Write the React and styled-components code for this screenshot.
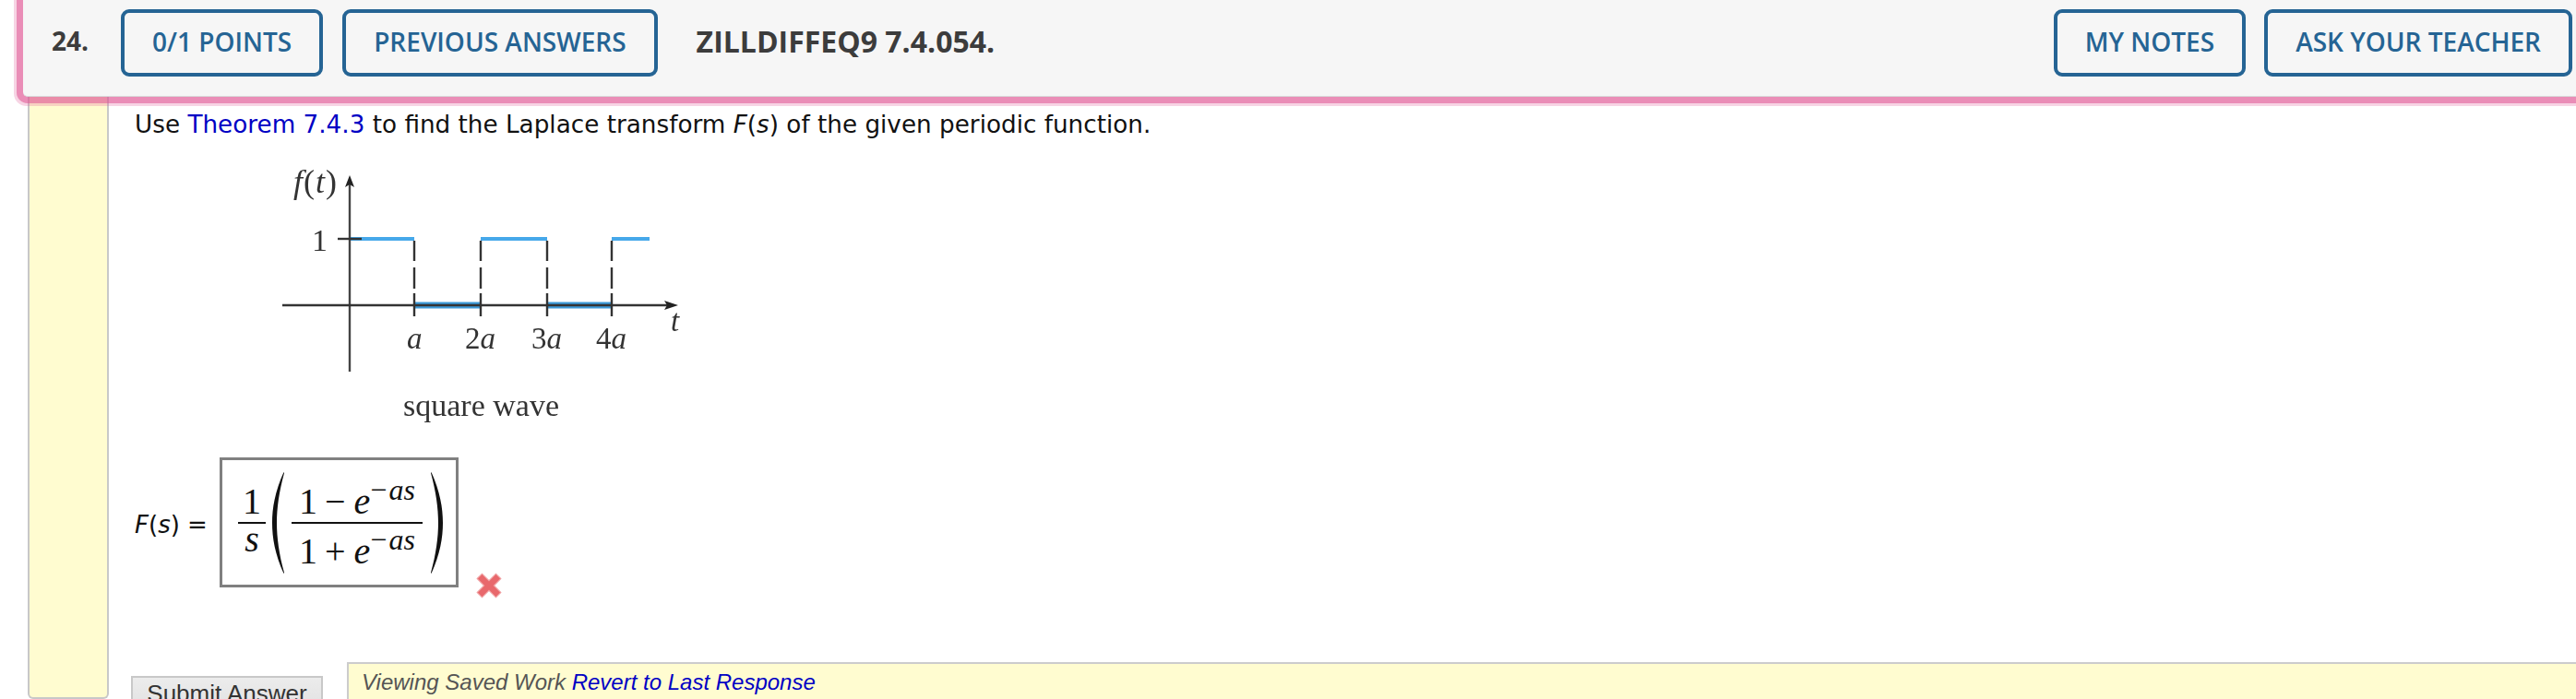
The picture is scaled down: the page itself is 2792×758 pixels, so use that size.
import React from "react";
import styled, { createGlobalStyle } from "styled-components";

const Global = createGlobalStyle`
  html, body { margin: 0; padding: 0; background: #fff; overflow: hidden; }
  #root { width: 2792px; height: 758px; overflow: hidden; }
`;

const Page = styled.div`
  width: 2792px;
  height: 758px;
  overflow: hidden;
  display: flex;
  flex-direction: column;
`;

const Header = styled.header`
  position: relative;
  z-index: 2;
  flex: none;
  height: 105px;
  box-sizing: border-box;
  margin: 0 -16px 0 25px;
  padding: 10px 20px 0 31px;
  background: #f6f6f6;
  border-bottom: 1px solid #d8d8d8;
  border-radius: 0 0 0 5px;
  box-shadow: 0 0 0 7px rgba(224, 90, 150, 0.58), 0 0 0 10px rgba(224, 90, 150, 0.26);
  display: flex;
  align-items: flex-start;
  font-family: "Open Sans", sans-serif;
  font-weight: 600;
  font-size: 28px;
`;

const Number = styled.div`
  height: 73px;
  line-height: 69px;
  width: 75px;
  color: #3c3c3c;
  font-weight: 700;
`;

const Pill = styled.div`
  height: 73px;
  box-sizing: border-box;
  border: 4px solid #256494;
  border-radius: 9px;
  padding: 0 30px;
  line-height: 63px;
  color: #256494;
  margin-right: ${(p) => p.$gap || 0}px;
  white-space: nowrap;
`;

const Title = styled.div`
  margin-left: 42px;
  flex: 1;
  height: 73px;
  line-height: 69px;
  font-size: 32px;
  color: #3c3c3c;
  font-weight: 700;
`;

const Main = styled.main`
  flex: 1;
  display: flex;
  min-height: 0;
`;

const Margin = styled.div`
  flex: none;
  width: 88px;
  box-sizing: border-box;
  margin-left: 30px;
  background: #fffcd0;
  border: 2px solid #c8c8c8;
  border-top: 0;
  border-radius: 0 0 6px 6px;
`;

const Content = styled.div`
  flex: 1;
  padding: 11px 0 0 26px;
  min-width: 0;
`;

const Question = styled.p`
  margin: 0 0 0 2px;
  font-family: "DejaVu Sans", sans-serif;
  font-size: 26.25px;
  line-height: 38px;
  color: #111;
  white-space: nowrap;
  a { color: #0000c4; text-decoration: none; }
`;

const Figure = styled.svg`
  display: block;
  margin: 6px 0 0 153px;
  filter: blur(0.5px);
`;

const AnswerRow = styled.div`
  display: flex;
  align-items: center;
  margin-top: 26px;
  height: 141px;
`;

const Label = styled.div`
  width: 92px;
  flex: none;
  margin-left: 2px;
  font-family: "DejaVu Sans", sans-serif;
  font-size: 26px;
  color: #111;
  padding-top: 5px;
`;

const MathBox = styled.div`
  width: 259px;
  height: 141px;
  box-sizing: border-box;
  border: 3px solid #808080;
  display: flex;
  align-items: center;
  padding-left: 17px;
  font-family: "Liberation Serif", serif;
  font-size: 40px;
  color: #111;
  background: #fff;
`;

const Frac = styled.div`
  width: ${(p) => p.$w}px;
  flex: none;
  margin: 0 ${(p) => p.$mr}px 0 ${(p) => p.$ml}px;
  display: flex;
  flex-direction: column;
  white-space: nowrap;
`;

const Num = styled.div`
  height: 50px;
  line-height: 55px;
  border-bottom: 2px solid #111;
  padding-left: ${(p) => p.$pad || 0}px;
  text-align: ${(p) => (p.$pad ? "left" : "center")};
`;

const Den = styled.div`
  height: 50px;
  line-height: ${(p) => p.$line}px;
  padding-left: ${(p) => p.$pad || 0}px;
  text-align: ${(p) => (p.$pad ? "left" : "center")};
`;

const V = styled.i`
  font-family: "Liberation Serif", serif;
`;

const Op = styled.span`
  margin: 0 9px 0 8px;
`;

const Sup = styled.sup`
  font-size: 32px;
  line-height: 0;
  vertical-align: 15px;
`;

const SupMinus = styled.span`
  margin: 0 2px 0 0;
`;

const Paren = styled.svg`
  flex: none;
  display: block;
  transform: ${(p) => (p.$flip ? "scaleX(-1)" : "none")};
`;

const Wrong = styled.svg`
  flex: none;
  align-self: flex-end;
  margin: 0 0 -13px 18px;
`;

const Footer = styled.div`
  display: flex;
  align-items: flex-start;
  margin-top: 81px;
  font-family: "Liberation Sans", sans-serif;
`;

const Submit = styled.button`
  flex: none;
  margin: 15px 26px 0 -2px;
  width: 208px;
  height: 50px;
  box-sizing: border-box;
  padding: 0 0 12px;
  border: 2px solid #c8c8c8;
  background: linear-gradient(#ececec, #dedede);
  color: #333;
  font-family: inherit;
  font-size: 26px;
`;

const Banner = styled.div`
  flex: 1;
  height: 60px;
  box-sizing: border-box;
  padding: 2px 0 0 14px;
  background: #fffcd0;
  border: 2px solid #ccc;
  border-right: 0;
  border-bottom: 0;
  font-size: 24px;
  font-style: italic;
  color: #555;
  line-height: 36px;
  white-space: nowrap;
  a { color: #0000c4; text-decoration: none; }
`;

const FigText = styled.text`
  font-family: "Liberation Serif", serif;
  fill: #333;
  font-size: ${(p) => p.$size || 33}px;
  font-style: ${(p) => (p.$plain ? "normal" : "italic")};
  letter-spacing: ${(p) => p.$track || 0}px;
`;

const ItalicSpan = styled.tspan`
  font-style: italic;
`;

const PlainSpan = styled.tspan`
  font-style: normal;
`;

function SquareWave() {
  // figure origin: page (297, 160)
  const x = (v) => v - 297;
  const y = (v) => v - 160;
  const highs = [[379, 449], [521, 593], [663, 704]];
  const lows = [[449, 521], [593, 663]];
  const drops = [449, 521, 593, 663];
  return (
    <Figure width="450" height="310" viewBox="0 0 450 310">
      {highs.map(([a, b]) => (
        <line key={a} x1={x(a)} x2={x(b)} y1={y(259)} y2={y(259)} stroke="#46a8ea" strokeWidth="4" />
      ))}
      {lows.map(([a, b]) => (
        <line key={a} x1={x(a)} x2={x(b)} y1={y(331)} y2={y(331)} stroke="#3d9ad8" strokeWidth="7" />
      ))}
      {drops.map((d) => (
        <line key={d} x1={x(d)} x2={x(d)} y1={y(261)} y2={y(343)} stroke="#333" strokeWidth="2.4" strokeDasharray="22 7 23 5 25" />
      ))}
      <line x1={x(379)} x2={x(379)} y1={y(196)} y2={y(403)} stroke="#444" strokeWidth="2.4" />
      <path d={`M${x(379)} ${y(190)} l-5 13 l5 -3 l5 3 z`} fill="#222" />
      <line x1={x(306)} x2={x(728)} y1={y(331)} y2={y(331)} stroke="#333" strokeWidth="2.4" />
      <path d={`M${x(735)} ${y(331)} l-15 -5 l3 5 l-3 5 z`} fill="#222" />
      <line x1={x(366)} x2={x(392)} y1={y(259)} y2={y(259)} stroke="#333" strokeWidth="2.4" />
      <FigText x={x(318)} y={y(209)} $size={36} $track={1}>f<PlainSpan>(</PlainSpan>t<PlainSpan>)</PlainSpan></FigText>
      <FigText x={x(338)} y={y(272)} $size={34} $plain>1</FigText>
      <FigText x={x(441)} y={y(378)}>a</FigText>
      <FigText x={x(504)} y={y(378)} $plain>2<ItalicSpan>a</ItalicSpan></FigText>
      <FigText x={x(576)} y={y(378)} $plain>3<ItalicSpan>a</ItalicSpan></FigText>
      <FigText x={x(646)} y={y(378)} $plain>4<ItalicSpan>a</ItalicSpan></FigText>
      <FigText x={x(727)} y={y(359)}>t</FigText>
      <FigText x={x(437)} y={y(451)} $size={34} $plain>square wave</FigText>
    </Figure>
  );
}

function BigParen({ flip }) {
  return (
    <Paren $flip={flip} width="13" height="112" viewBox="0 0 13 112">
      <path d="M12.5 1 C3 22 0 40 0 56 C0 72 3 90 12.5 111 L13 110 C7.5 90 5 72 5 56 C5 40 7.5 22 13 2 Z" fill="#111" />
    </Paren>
  );
}

function Exponent() {
  return (
    <Sup>
      <SupMinus>−</SupMinus>
      <V>as</V>
    </Sup>
  );
}

export default function App() {
  return (
    <Page>
      <Global />
      <Header>
        <Number>24.</Number>
        <Pill $gap={21}>0/1 POINTS</Pill>
        <Pill>PREVIOUS ANSWERS</Pill>
        <Title>ZILLDIFFEQ9 7.4.054.</Title>
        <Pill $gap={20}>MY NOTES</Pill>
        <Pill>ASK YOUR TEACHER</Pill>
      </Header>
      <Main>
        <Margin />
        <Content>
          <Question>
            Use <a href="#theorem">Theorem 7.4.3</a> to find the Laplace transform <i>F</i>(<i>s</i>) of the given periodic function.
          </Question>
          <SquareWave />
          <AnswerRow>
            <Label>
              <i>F</i>(<i>s</i>) =
            </Label>
            <MathBox>
              <Frac $w={30} $ml={0} $mr={7}>
                <Num>1</Num>
                <Den $line={34}><V>s</V></Den>
              </Frac>
              <BigParen />
              <Frac $w={142} $ml={8} $mr={9}>
                <Num $pad={8}>1<Op>−</Op><V>e</V><Exponent /></Num>
                <Den $line={60} $pad={8}>1<Op>+</Op><V>e</V><Exponent /></Den>
              </Frac>
              <BigParen flip />
            </MathBox>
            <Wrong width="30" height="30" viewBox="0 0 28 28">
              <path d="M2 7 L7 2 L14 9 L21 2 L26 7 L19 14 L26 21 L21 26 L14 19 L7 26 L2 21 L9 14 Z" fill="#e8686c" stroke="#f0a0a2" strokeWidth="1" />
            </Wrong>
          </AnswerRow>
          <Footer>
            <Submit>Submit Answer</Submit>
            <Banner>
              Viewing Saved Work <a href="#revert">Revert to Last Response</a>
            </Banner>
          </Footer>
        </Content>
      </Main>
    </Page>
  );
}
